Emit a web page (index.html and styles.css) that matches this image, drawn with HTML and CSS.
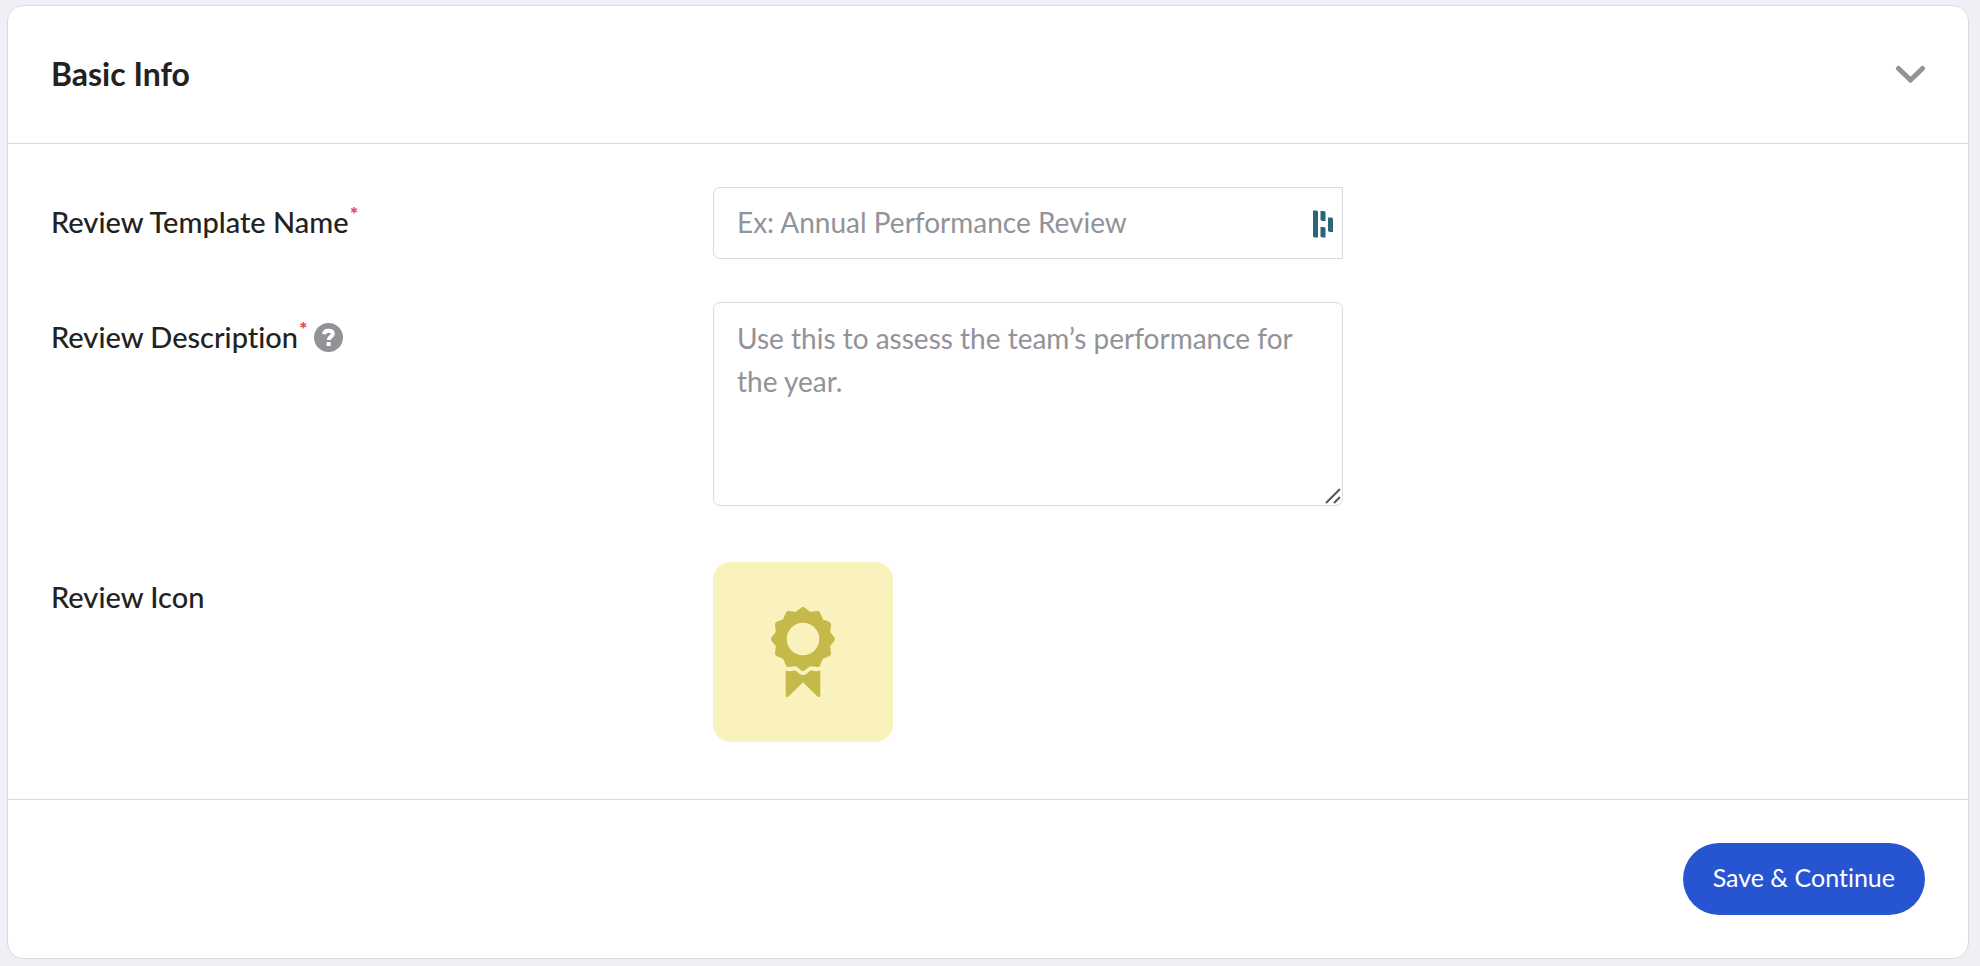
FILE: index.html
```html
<!DOCTYPE html>
<html lang="en">
<head>
  <meta charset="utf-8">
  <meta name="viewport" content="width=device-width, initial-scale=1">
  <title>Basic Info</title>
  <link rel="stylesheet" href="styles.css">
</head>
<body>
  <form class="card">
    <header class="card-header">
      <h2 class="card-title">Basic Info</h2>
      <button class="toggle" type="button" aria-label="Collapse section">
        <svg class="chevron" viewBox="0 0 30 18" aria-hidden="true"><path d="M3.500 3.500 L15.500 15 L27.500 3.500"/></svg>
      </button>
    </header>

    <div class="card-body">
      <div class="row">
        <div class="label-cell">
          <label class="label" for="name">Review Template Name</label><span class="required">*</span>
        </div>
        <div class="field">
          <input class="control text-input" id="name" type="text" placeholder="Ex: Annual Performance Review">
          <svg class="autofill" viewBox="0 0 20 28" aria-hidden="true">
            <path d="M0 0.5h3.500l1.500 1V27.500h-3.500l-1.500-1zM7.500 1h3.500l1.500 1v9h-3.500l-1.500-1zM7.500 17h3.500l1.500 1v9.500h-3.500l-1.500-1zM15 7.500h3.500l1.500 1v13.500h-3.500l-1.500-1z"/>
          </svg>
        </div>
      </div>

      <div class="row">
        <div class="label-cell">
          <label class="label" for="description">Review Description</label><span class="required">*</span>
          <button class="help" type="button" aria-label="Help">
            <svg class="help-icon" viewBox="0 0 29 29" aria-hidden="true">
              <circle cx="14.500" cy="14.500" r="14.500"/>
              <path d="M10 11.200C10.300 8.800 12 7.700 14.500 7.700C17.300 7.700 18.800 9 18.800 10.900C18.800 13.800 14.700 13.500 14.700 17"/>
              <rect x="12.600" y="19" width="4" height="4"/>
            </svg>
          </button>
        </div>
        <div class="field">
          <textarea class="control text-area" id="description" placeholder="Use this to assess the team’s performance for the year."></textarea>
          <svg class="grip" viewBox="0 0 16 16" aria-hidden="true"><path d="M1 15L15 1M9 15L15 9"/></svg>
        </div>
      </div>

      <div class="row row-icon">
        <div class="label-cell"><span class="label" id="icon-label">Review Icon</span></div>
        <div class="field">
          <button class="icon-tile" type="button" aria-labelledby="icon-label">
            <svg class="badge" viewBox="0 0 64 91" aria-hidden="true">
              <path class="rosette" d="M32 2.500L38.600 7.400L46.700 6.500L50 14L57.500 17.300L56.600 25.400L61.500 32L56.600 38.600L57.500 46.700L50 50L46.700 57.500L38.600 56.600L32 61.500L25.400 56.600L17.300 57.500L14 50L6.500 46.700L7.400 38.600L2.500 32L7.400 25.400L6.500 17.300L14 14L17.300 6.500L25.400 7.400Z"/>
              <circle class="hole" cx="32" cy="32" r="16.300"/>
              <path class="ribbon" d="M14.700 63.500Q19 65 24 63.200C27 65 28.500 68 32 68C35.500 68 37 65 40 63.200Q45 65 49.300 63.500V88.500Q49.300 90 47.500 90L46.500 89.500L32 75.300L17.500 89.500L16.500 90Q14.700 90 14.700 88.500Z"/>
            </svg>
          </button>
        </div>
      </div>
    </div>

    <footer class="card-footer">
      <button class="save" type="submit">Save &amp; Continue</button>
    </footer>
  </form>
</body>
</html>
```
FILE: styles.css
```css
* {
  box-sizing: border-box;
}

body {
  margin: 0;
  padding: 5px 11px 7px 7px;
  background: #eff0f5;
  color: #222;
  font-family: Lato, "Open Sans", sans-serif;
  font-size: 28px;
  font-variant-ligatures: none;
}

button {
  padding: 0;
  border: 0;
  background: none;
  font: inherit;
  cursor: pointer;
}

svg {
  display: block;
}

.card {
  border: 1px solid #dadae0;
  border-radius: 16px;
  background: #fff;
}

.card-header {
  display: flex;
  align-items: center;
  justify-content: space-between;
  padding: 43px 43px 45px;
  border-bottom: 1px solid #d9d9dc;
}

.card-title {
  margin: 0;
  font-size: 32px;
  font-weight: 700;
  line-height: 49px;
}

.chevron {
  width: 30px;
  height: 18px;
  fill: none;
  stroke: #929299;
  stroke-width: 5;
  stroke-linecap: round;
}

.card-body {
  display: flex;
  flex-direction: column;
  gap: 43px;
  padding: 43px 43px 57px;
}

.row {
  display: grid;
  grid-template-columns: 662fr 630fr 582fr;
}

.row-icon {
  margin-top: 13px;
}

.label-cell {
  display: flex;
  height: 70px;
  align-items: center;
}

.label {
  font-size: 29px;
  font-weight: 500;
  line-height: 70px;
}

.required {
  align-self: flex-start;
  margin-top: 16px;
  margin-left: 1px;
  color: #e0485a;
  font-family: Inter, sans-serif;
  font-size: 16px;
  font-weight: 600;
  line-height: 20px;
}

.help {
  margin-left: 6px;
}

.help-icon {
  width: 29px;
  height: 29px;
  fill: #929299;
}

.help-icon path {
  fill: none;
  stroke: #fff;
  stroke-width: 4;
}

.help-icon rect {
  fill: #fff;
}

.field {
  position: relative;
}

.control {
  display: block;
  width: 100%;
  margin: 0;
  border: 1px solid #d9d9de;
  outline: 0;
  background: #fff;
  color: #222;
  font: inherit;
}

.control::placeholder {
  color: #929299;
  opacity: 1;
}

.text-input {
  height: 72px;
  padding: 0 48px 2px 23px;
  border-radius: 7px 0 0 7px;
}

.text-area {
  height: 204px;
  padding: 14px 23px;
  border-radius: 7px;
  line-height: 43px;
  resize: none;
}

.autofill {
  position: absolute;
  top: 23px;
  right: 10px;
  width: 20px;
  height: 28px;
  fill: #2d6578;
}

.grip {
  position: absolute;
  right: 2px;
  bottom: 2px;
  width: 16px;
  height: 16px;
  fill: none;
  stroke: #555;
  stroke-width: 2;
}

.icon-tile {
  display: grid;
  width: 180px;
  height: 180px;
  place-items: center;
  border-radius: 18px;
  background: #faf2bc;
}

.badge {
  width: 64px;
  height: 91px;
  fill: #c5b94a;
}

.rosette {
  stroke: #c5b94a;
  stroke-width: 5;
  stroke-linejoin: round;
}

.hole {
  fill: #faf2bc;
}

.card-footer {
  display: flex;
  justify-content: flex-end;
  padding: 43px;
  border-top: 1px solid #d9d9dc;
}

.save {
  height: 72px;
  padding: 0 30px 4px;
  border-radius: 36px;
  background: #2755d2;
  color: #fff;
  font-size: 25px;
}
```
